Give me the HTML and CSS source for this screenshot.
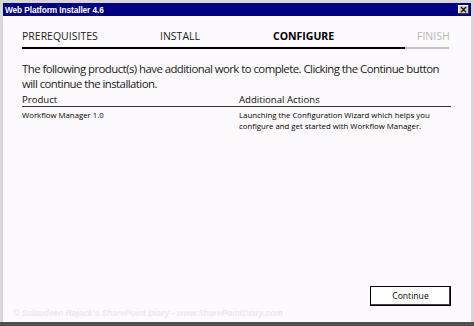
FILE: index.html
```html
<!DOCTYPE html>
<html lang="en">
<head>
    <meta charset="UTF-8">
    <title>Web Platform Installer 4.6</title>
    <link rel="stylesheet" href="styles.css">
</head>
<body>
    <div class="window">
        <div class="titlebar">
            <span class="title">Web Platform Installer 4.6</span>
            <span class="close-btn">×</span>
        </div>
        <div class="content">
            <div class="steps">
                <span class="step">PREREQUISITES</span>
                <span class="step">INSTALL</span>
                <span class="step current">CONFIGURE</span>
                <span class="step pending">FINISH</span>
            </div>
            <div class="progress">
                <div class="done"></div>
                <div class="todo"></div>
            </div>

            <p class="intro">The following product(s) have additional work to complete. Clicking the Continue button will continue the installation.</p>

            <div class="table">
                <div class="row head">
                    <span class="col-product">Product</span>
                    <span class="col-actions">Additional Actions</span>
                </div>
                <div class="row">
                    <span class="col-product">Workflow Manager 1.0</span>
                    <span class="col-actions">Launching the Configuration Wizard which helps you configure and get started with Workflow Manager.</span>
                </div>
            </div>

            <div class="footer">
                <span class="watermark">© Salaudeen Rajack's SharePoint Diary - www.SharePointDiary.com</span>
                <button class="continue">Continue</button>
            </div>
        </div>
        <div class="bottom-edge"></div>
    </div>
</body>
</html>
```

FILE: styles.css
```css
body {
    margin: 0;
    width: 474px;
    height: 326px;
    overflow: hidden;
    background: #d4d0c8;
    font-family: "Open Sans", "Noto Sans", sans-serif;
    color: #111;
}

.window {
    height: 326px;
    display: flex;
    flex-direction: column;
    padding: 3px 3px 0 3px;
    box-sizing: border-box;
    background: #d8d6d8;
}

.titlebar {
    height: 13px;
    background: #000080;
    display: flex;
    align-items: center;
    justify-content: space-between;
    padding: 0 2px 0 2px;
}

.title {
    color: #fff;
    font-family: "Liberation Sans", Arial, sans-serif;
    font-weight: bold;
    font-size: 8.3px;
    letter-spacing: -0.1px;
}

.close-btn {
    width: 11px;
    height: 9px;
    background: #d4d0c8;
    color: #000;
    font-family: "DejaVu Sans", sans-serif;
    font-weight: bold;
    font-size: 10px;
    line-height: 9px;
    text-align: center;
    box-shadow: inset -1px -1px #404040, inset 1px 1px #fff;
}

.content {
    flex: 1;
    background: #fdfafd;
    padding: 0 21px 0 19px;
    display: flex;
    flex-direction: column;
}

.steps {
    display: flex;
    margin-top: 13px;
    font-size: 10.5px;
    height: 15px;
    line-height: 15px;
    color: #222;
}

.step:nth-child(1) { width: 138px; }
.step:nth-child(2) { width: 113px; }
.step:nth-child(3) { width: 144px; }

.step.current {
    font-weight: bold;
    color: #000;
}

.step.pending {
    color: #b8b8b8;
}

.progress {
    display: flex;
    margin-top: 3px;
    height: 2px;
}

.progress .done {
    width: 383px;
    background: #000;
}

.progress .todo {
    width: 44px;
    background: #c4c4c4;
}

.intro {
    margin: 12px 0 0 0;
    font-size: 11.4px;
    line-height: 15px;
    letter-spacing: -0.55px;
    color: #1a1a1a;
}

.table {
    margin-top: 2px;
    width: 429px;
}

.row {
    display: flex;
}

.row.head {
    font-size: 9.6px;
    line-height: 13px;
    border-bottom: 1px solid #333;
    padding-bottom: 0;
}

.row:not(.head) {
    font-size: 7.8px;
    line-height: 11px;
    padding-top: 3px;
    color: #000;
}

.col-product {
    width: 217px;
}

.col-actions {
    flex: 1;
}

.footer {
    margin-top: auto;
    display: flex;
    flex-direction: column;
    position: relative;
    height: 36px;
}

.continue {
    align-self: flex-end;
    margin-right: -1px;
    width: 81px;
    height: 20px;
    background: #fff;
    border: 1px solid #000;
    box-shadow: inset -1px -1px #404040;
    font-family: "Open Sans", sans-serif;
    font-size: 8.6px;
    color: #000;
    padding: 0;
}

.watermark {
    position: absolute;
    left: -9px;
    bottom: 4px;
    font-family: "Liberation Sans", Arial, sans-serif;
    font-weight: bold;
    font-style: italic;
    font-size: 8.4px;
    color: #ebe7eb;
    white-space: nowrap;
}

.bottom-edge {
    height: 4px;
    margin: 0 -3px 0 -3px;
    background: #505050;
}
```
